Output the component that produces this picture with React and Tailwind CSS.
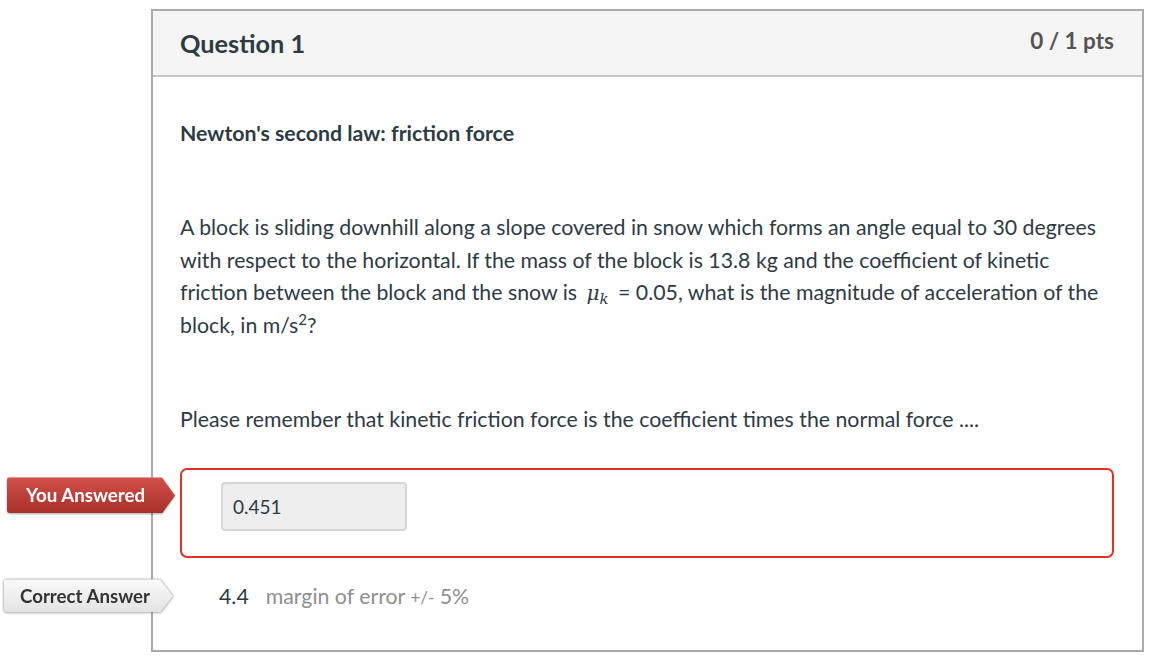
import React from "react";

const Label = ({ tone, children }) => {
  const red = tone === "red";
  return (
    <div className={red ? "[filter:drop-shadow(0_1px_1px_rgba(0,0,0,0.35))]" : "[filter:drop-shadow(0_0_1px_#8a8a8a)_drop-shadow(0_1px_1px_rgba(0,0,0,0.15))]"}>
      <div
        className={
          "flex items-center text-[18.7px] font-bold rounded-l-[3px] [clip-path:polygon(0_0,calc(100%-13px)_0,100%_50%,calc(100%-13px)_100%,0_100%)] " +
          (red
            ? "w-[168px] h-[36px] pl-[19px] text-white bg-gradient-to-b from-[#d2514a] to-[#a9302a]"
            : "w-[169px] h-[33px] pl-[16px] text-[#333] bg-gradient-to-b from-[#fafafa] to-[#e4e4e4]")
        }
      >
        {children}
      </div>
    </div>
  );
};

export default function App() {
  return (
    <div className="w-[1154px] h-[662px] bg-white pt-[9px] pl-[151px] font-['Lato','Open_Sans',sans-serif] text-[#2d3b45]">
      <div className="relative w-[993px] h-[643px] border-2 border-[#aaaaaa]">
        {/* header */}
        <div className="flex justify-between items-center h-[66px] bg-[#f5f5f5] border-b-2 border-[#c7c7c7] pl-[27px] pr-[28px]">
          <h2 className="text-[25.3px] font-bold mt-[2px]">Question 1</h2>
          <span className="text-[22.5px] font-bold text-[#555] -mt-[5px]">0 / 1 pts</span>
        </div>

        {/* body */}
        <div className="pl-[27px] pr-[28px] text-[21.3px]">
          <p className="font-bold mt-[44px] leading-[24px]">Newton's second law: friction force</p>

          <p className="mt-[66px] leading-[32.6px]">
            A block is sliding downhill along a slope covered in snow which forms an angle equal to 30 degrees with
            respect to the horizontal. If the mass of the block is 13.8 kg and the coefficient of kinetic friction
            between the block and the snow is{" "}
            <span className="italic font-['DejaVu_Serif',serif] text-[20px] leading-none ml-[4px] mr-[4px]">
              μ<sub className="text-[15px] leading-none">k</sub>
            </span>{" "}
            = 0.05, what is the magnitude of acceleration of the block, in m/s
            <sup className="text-[15px] leading-none">2</sup>?
          </p>

          <p className="mt-[62px] leading-[32px]">
            Please remember that kinetic friction force is the coefficient times the normal force ....
          </p>

          {/* you answered */}
          <div className="relative mt-[33px]">
            <div className="absolute left-[-173px] top-[9px]">
              <Label tone="red">You Answered</Label>
            </div>
            <div className="h-[90px] border-2 border-[#e3312a] rounded-[7px] pl-[39px] pt-[12px]">
              <div className="w-[186px] h-[49px] bg-[#eeeeee] border-2 border-[#d6d6d6] rounded-[4px] flex items-center pl-[10px] text-[19px]">
                0.451
              </div>
            </div>
          </div>

          {/* correct answer */}
          <div className="relative mt-[21px] h-[36px] flex items-center pl-[39px]">
            <div className="absolute left-[-176px] top-[0px]">
              <Label tone="gray">Correct Answer</Label>
            </div>
            <span>4.4</span>
            <span className="ml-[17px] text-[#8f8f8f]">
              margin of error <span className="text-[17px]">+/-</span> 5%
            </span>
          </div>
        </div>
      </div>
    </div>
  );
}
